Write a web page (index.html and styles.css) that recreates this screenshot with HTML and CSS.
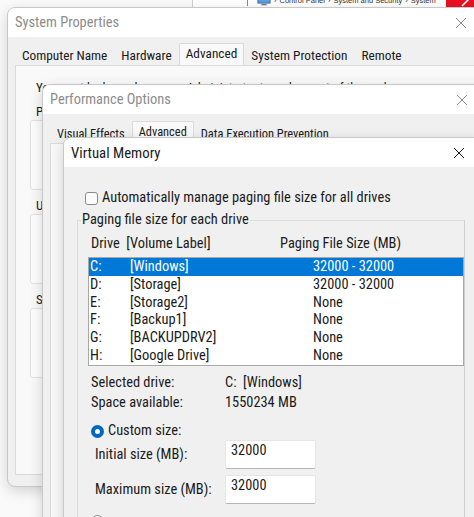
FILE: index.html
```html
<!DOCTYPE html>
<html lang="en">
<head>
    <meta charset="UTF-8">
    <title>Virtual Memory</title>
    <link rel="stylesheet" href="styles.css">
</head>
<body>

<div class="desktop">

    <!-- Explorer window peeking out at the top -->
    <div class="explorer">
        <div class="crumbs">
            <span class="crumb-sep"></span>
            <svg class="pc-icon" viewBox="0 0 16 12"><rect x="1" y="1" width="14" height="8" fill="#5aa0e0" stroke="#3a6ea5"/><rect x="5" y="10" width="6" height="1.5" fill="#777"/></svg>
            <span>›</span><span>Control Panel</span><span>›</span><span>System and Security</span><span>›</span><span>System</span>
        </div>
        <div class="explorer-close">
            <svg viewBox="0 0 29 30"><path d="M16 30 L29 17" stroke="#fff" stroke-width="1.6"/></svg>
        </div>
    </div>

    <!-- System Properties -->
    <div class="window sysprops">
        <div class="titlebar">
            <span class="title">System Properties</span>
            <span class="close"><svg viewBox="0 0 10 10"><path d="M0 0L10 10M10 0L0 10"/></svg></span>
        </div>
        <div class="win-body">
            <div class="tabs">
                <span class="tab">Computer Name</span>
                <span class="tab">Hardware</span>
                <span class="tab selected">Advanced</span>
                <span class="tab">System Protection</span>
                <span class="tab">Remote</span>
            </div>
            <div class="tab-page sp-page">
                <p class="note">You must be logged on as an Administrator to make most of these changes.</p>
                <div class="sp-group">
                    <div class="sp-label">Performance</div>
                    <div class="sp-box"></div>
                </div>
                <div class="sp-group">
                    <div class="sp-label">User Profiles</div>
                    <div class="sp-box"></div>
                </div>
                <div class="sp-group">
                    <div class="sp-label">Startup and Recovery</div>
                    <div class="sp-box"></div>
                </div>
            </div>
        </div>
    </div>

    <!-- Performance Options -->
    <div class="window perfopts">
        <div class="titlebar">
            <span class="title">Performance Options</span>
            <span class="close"><svg viewBox="0 0 10 10"><path d="M0 0L10 10M10 0L0 10"/></svg></span>
        </div>
        <div class="win-body">
            <div class="tabs">
                <span class="tab">Visual Effects</span>
                <span class="tab selected">Advanced</span>
                <span class="tab">Data Execution Prevention</span>
            </div>
            <div class="tab-page po-page"></div>
        </div>
    </div>

    <!-- Virtual Memory -->
    <div class="window vmem active">
        <div class="titlebar">
            <span class="title">Virtual Memory</span>
            <span class="close"><svg viewBox="0 0 10 10"><path d="M0 0L10 10M10 0L0 10"/></svg></span>
        </div>
        <div class="win-body vm-body">
            <label class="auto">
                <span class="checkbox"></span>
                Automatically manage paging file size for all drives
            </label>

            <fieldset class="group">
                <legend>Paging file size for each drive</legend>

                <div class="list-head">
                    <span class="pre">Drive  [Volume Label]</span>
                    <span>Paging File Size (MB)</span>
                </div>

                <div class="listbox">
                    <div class="row selected"><span>C:</span><span>[Windows]</span><span>32000 - 32000</span></div>
                    <div class="row"><span>D:</span><span>[Storage]</span><span>32000 - 32000</span></div>
                    <div class="row"><span>E:</span><span>[Storage2]</span><span>None</span></div>
                    <div class="row"><span>F:</span><span>[Backup1]</span><span>None</span></div>
                    <div class="row"><span>G:</span><span>[BACKUPDRV2]</span><span>None</span></div>
                    <div class="row"><span>H:</span><span>[Google Drive]</span><span>None</span></div>
                </div>

                <div class="info first">
                    <span>Selected drive:</span><span class="pre">C:  [Windows]</span>
                </div>
                <div class="info">
                    <span>Space available:</span><span>1550234 MB</span>
                </div>

                <label class="radio-row first">
                    <span class="radio checked"></span>
                    Custom size:
                </label>
                <div class="size-row">
                    <span>Initial size (MB):</span>
                    <input type="text" class="textbox" value="32000">
                </div>
                <div class="size-row">
                    <span>Maximum size (MB):</span>
                    <input type="text" class="textbox" value="32000">
                </div>
                <label class="radio-row">
                    <span class="radio"></span>
                    System managed size
                </label>
            </fieldset>
        </div>
    </div>

</div>

</body>
</html>
```
FILE: styles.css
```css
body {
    margin: 0;
    font-family: "Roboto Condensed", "Liberation Sans", sans-serif;
    color: #1a1a1a;
}
.desktop {
    position: relative;
    width: 474px;
    height: 517px;
    overflow: hidden;
    background: #fafafa;
}

/* Explorer window behind everything */
.explorer {
    position: absolute;
    left: 192px;
    top: -25px;
    width: 282px;
    height: 50px;
    background: #fff;
    border-left: 1px solid #cfcfcf;
    display: flex;
    align-items: center;
    overflow: hidden;
}
.crumbs {
    display: flex;
    align-items: center;
    gap: 3px;
    padding-left: 54px;
    font-family: "Liberation Sans", sans-serif;
    font-size: 7.5px;
    color: #333;
    white-space: nowrap;
}
.crumb-sep {
    width: 1px;
    height: 12px;
    background: #888;
    margin-right: 6px;
}
.pc-icon {
    width: 14px;
    height: 11px;
}
.explorer-close {
    position: absolute;
    right: 0;
    top: 0;
    width: 29px;
    height: 32px;
    background: #e81123;
}
.explorer-close svg {
    display: block;
    width: 29px;
    height: 32px;
}

/* Windows */
.window {
    position: absolute;
    display: flex;
    flex-direction: column;
    background: #f0f0f0;
    border: 1px solid #c8c8c8;
    border-radius: 8px;
    box-shadow: 0 4px 14px rgba(0, 0, 0, 0.16);
    overflow: hidden;
}
.sysprops {
    left: 7px;
    top: 7px;
    width: 476px;
    height: 478px;
}
.perfopts {
    left: 42px;
    top: 84px;
    width: 442px;
    height: 460px;
}
.vmem {
    left: 63px;
    top: 137px;
    width: 418px;
    height: 420px;
}
.titlebar {
    flex: none;
    height: 29px;
    background: #fff;
    display: flex;
    align-items: center;
    justify-content: space-between;
}
.title {
    padding-left: 7px;
    font-size: 14.4px;
    color: #8c8c8c;
}
.close {
    width: 46px;
    display: flex;
    justify-content: center;
}
.close svg {
    width: 10px;
    height: 10px;
    stroke: #8c8c8c;
    stroke-width: 1;
}
.active .title {
    font-size: 14.8px;
    color: #1a1a1a;
}
.active .close svg {
    stroke: #1a1a1a;
}

/* Tabs */
.win-body {
    flex: 1;
    padding: 6px 0 0 7px;
}
.perfopts .win-body {
    padding-top: 7px;
}
.tabs {
    display: flex;
    align-items: flex-end;
    height: 22px;
    font-size: 13.3px;
}
.perfopts .tabs {
    font-size: 12.4px;
}
.tab {
    line-height: 18px;
    padding: 0 7px;
}
.tab.selected {
    background: #f9f9f9;
    border: 1px solid #dadada;
    border-bottom: none;
    border-radius: 2px 2px 0 0;
    padding: 1px 6px 2px;
}
.tab-page {
    background: #f9f9f9;
    border: 1px solid #dadada;
}
.sp-page {
    height: 394px;
    padding: 14px 0 0 20px;
    font-size: 13px;
}
.note {
    margin: 0;
    line-height: 16px;
    white-space: nowrap;
}
.sp-group {
    margin-top: 8px;
}
.sp-label {
    line-height: 16px;
}
.sp-box {
    height: 68px;
    margin: 0 12px 0 -6px;
    border: 1px solid #e2e2e2;
    border-radius: 3px;
    background: #fdfdfd;
}
.po-page {
    height: 400px;
}

/* Virtual Memory dialog */
.vm-body {
    padding: 21px 17px 0 13px;
    font-size: 14.4px;
}
.auto {
    display: flex;
    align-items: center;
    gap: 4px;
    padding-left: 8px;
    line-height: 20px;
    white-space: nowrap;
}
.checkbox {
    width: 13px;
    height: 13px;
    box-sizing: border-box;
    border: 1px solid #8a8a8a;
    border-radius: 3px;
    background: #fbfbfb;
}
.group {
    margin: 3px 0 0;
    padding: 6px 0 0 10px;
    border: 1px solid #dcdcdc;
    border-right-color: #d0d0d0;
    border-bottom: none;
}
.group legend {
    margin-left: -7px;
    padding: 0 1px;
    line-height: 18px;
}
.pre {
    white-space: pre;
}
.list-head {
    display: grid;
    grid-template-columns: 189px 1fr;
    padding-left: 3px;
    line-height: 18px;
}
.listbox {
    margin-top: 4px;
    background: #fff;
    border: 1px solid #a8a8a8;
}
.row {
    display: grid;
    grid-template-columns: 40px 183px 1fr;
    padding-left: 1px;
    line-height: 17.8px;
}
.row.selected {
    background: #0078d7;
    color: #fff;
}
.info {
    display: grid;
    grid-template-columns: 134px 1fr;
    padding-left: 3px;
    line-height: 20px;
}
.info.first {
    margin-top: 7px;
}
.radio-row {
    display: flex;
    align-items: flex-start;
    gap: 4px;
    padding-left: 3px;
    margin-top: 8px;
    line-height: 20px;
}
.radio {
    width: 13px;
    height: 13px;
    margin-top: 4px;
    box-sizing: border-box;
    border: 1px solid #8a8a8a;
    border-radius: 50%;
    background: #fbfbfb;
}
.radio.checked {
    border: 4px solid #0067c0;
    background: #fff;
}
.size-row + .radio-row {
    margin-top: 11px;
}
.size-row + .radio-row .radio {
    margin-top: 0;
}
.size-row {
    display: grid;
    grid-template-columns: 130px 91px;
    align-items: center;
    padding-left: 7px;
}
.size-row + .size-row {
    margin-top: 6px;
}
.radio-row.first + .size-row {
    margin-top: -1px;
}
.textbox {
    box-sizing: border-box;
    width: 91px;
    height: 29px;
    margin: 0;
    padding: 0 5px 8px;
    font: 14.4px "Roboto Condensed", "Liberation Sans", sans-serif;
    color: #1a1a1a;
    background: #fff;
    border: 1px solid #e6e6e6;
    border-bottom-color: #b8b8b8;
    border-radius: 2px;
    outline: none;
}
```
